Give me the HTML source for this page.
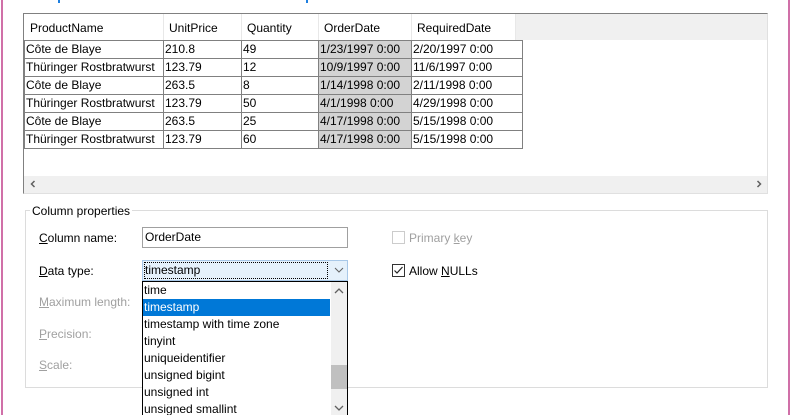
<!DOCTYPE html>
<html><head><meta charset="utf-8"><style>
*{margin:0;padding:0;box-sizing:border-box}
html,body{width:790px;height:415px;overflow:hidden}
body{background:#fff;position:relative;font-family:"Liberation Sans","DejaVu Sans",sans-serif;font-size:12px;color:#000}
.a{position:absolute}
.t{white-space:nowrap;line-height:18px}
u{text-decoration:underline}
.g{color:#a0a0a0}
</style></head><body>
<div class="a" style="left:1px;top:0;width:2px;height:415px;background:#d070a8"></div>
<div class="a" style="left:788px;top:0;width:2px;height:415px;background:#d070a8"></div>
<div class="a" style="left:58px;top:0;width:2px;height:3px;background:#1e7fe0"></div>
<div class="a" style="left:306px;top:0;width:2px;height:3px;background:#1e7fe0"></div>

<!-- grid -->
<div class="a" style="left:23px;top:13px;width:745px;height:181px;border-top:1px solid #808080;border-left:1px solid #808080;border-bottom:1px solid #e0e0e0;border-right:1px solid #e0e0e0;background:#fff"></div>
<div class="a" style="left:24px;top:14px;width:743px;height:26px;background:#f0f0f0"></div>
<div class="a" style="left:24px;top:14px;width:492px;height:26px;background:#fff"></div>
<div class="a" style="left:163px;top:14px;width:1px;height:26px;background:#e8e8e8"></div>
<div class="a" style="left:241px;top:14px;width:1px;height:26px;background:#e8e8e8"></div>
<div class="a" style="left:318px;top:14px;width:1px;height:26px;background:#e8e8e8"></div>
<div class="a" style="left:411px;top:14px;width:1px;height:26px;background:#e8e8e8"></div>
<div class="a" style="left:515px;top:14px;width:1px;height:26px;background:#e8e8e8"></div>
<div class="a t" style="left:30px;top:19px">ProductName</div>
<div class="a t" style="left:169px;top:19px">UnitPrice</div>
<div class="a t" style="left:247px;top:19px">Quantity</div>
<div class="a t" style="left:324px;top:19px">OrderDate</div>
<div class="a t" style="left:417px;top:19px">RequiredDate</div>

<div class="a" style="left:318px;top:40px;width:94px;height:108px;background:#d3d3d3"></div>
<svg class="a" style="left:0;top:0" width="790" height="200">
<g stroke="#808080" stroke-width="1" fill="none" shape-rendering="crispEdges">
<line x1="24" y1="40.5" x2="523" y2="40.5"/>
<line x1="24" y1="58.5" x2="523" y2="58.5"/>
<line x1="24" y1="76.5" x2="523" y2="76.5"/>
<line x1="24" y1="94.5" x2="523" y2="94.5"/>
<line x1="24" y1="112.5" x2="523" y2="112.5"/>
<line x1="24" y1="130.5" x2="523" y2="130.5"/>
<line x1="24" y1="148.5" x2="523" y2="148.5"/>
<line x1="24.5" y1="40" x2="24.5" y2="149"/>
<line x1="163.5" y1="40" x2="163.5" y2="149"/>
<line x1="241.5" y1="40" x2="241.5" y2="149"/>
<line x1="318.5" y1="40" x2="318.5" y2="149"/>
<line x1="411.5" y1="40" x2="411.5" y2="149"/>
<line x1="522.5" y1="40" x2="522.5" y2="149"/>
</g></svg>
<div class="a" style="left:26px;top:40px;line-height:18px;white-space:nowrap">Côte de Blaye<br>Thüringer Rostbratwurst<br>Côte de Blaye<br>Thüringer Rostbratwurst<br>Côte de Blaye<br>Thüringer Rostbratwurst</div>
<div class="a" style="left:165px;top:40px;line-height:18px">210.8<br>123.79<br>263.5<br>123.79<br>263.5<br>123.79</div>
<div class="a" style="left:243px;top:40px;line-height:18px">49<br>12<br>8<br>50<br>25<br>60</div>
<div class="a" style="left:320px;top:40px;line-height:18px;white-space:nowrap">1/23/1997 0:00<br>10/9/1997 0:00<br>1/14/1998 0:00<br>4/1/1998 0:00<br>4/17/1998 0:00<br>4/17/1998 0:00</div>
<div class="a" style="left:413px;top:40px;line-height:18px;white-space:nowrap">2/20/1997 0:00<br>11/6/1997 0:00<br>2/11/1998 0:00<br>4/29/1998 0:00<br>5/15/1998 0:00<br>5/15/1998 0:00</div>
<div class="a" style="left:24px;top:176px;width:743px;height:17px;background:#f0f0f0"></div>
<svg class="a" style="left:30px;top:180px" width="6" height="8"><path d="M4.5 1 L1.5 4 L4.5 7" stroke="#606060" fill="none" stroke-width="1.5"/></svg>
<svg class="a" style="left:756px;top:180px" width="6" height="8"><path d="M1.5 1 L4.5 4 L1.5 7" stroke="#606060" fill="none" stroke-width="1.5"/></svg>

<!-- group -->
<div class="a" style="left:25px;top:210px;width:743px;height:178px;border:1px solid #dcdcdc"></div>
<div class="a t" style="left:30px;top:202px;background:#fff;padding:0 2px">Column properties</div>
<div class="a t" style="left:39px;top:229px"><u>C</u>olumn name:</div>
<div class="a" style="left:142px;top:227px;width:206px;height:21px;border:1px solid #a0a0a0"></div>
<div class="a t" style="left:145px;top:228px">OrderDate</div>
<div class="a t" style="left:39px;top:262px"><u>D</u>ata type:</div>
<div class="a" style="left:142px;top:260px;width:206px;height:21px;border:1px solid #a8c8e8;background:#e5f1fb"></div>
<div class="a" style="left:144px;top:262px;width:184px;height:17px;border:1px dotted #000"></div>
<div class="a t" style="left:145px;top:261px">timestamp</div>
<svg class="a" style="left:334px;top:267px" width="10" height="6"><path d="M1 1 L5 5 L9 1" stroke="#606060" fill="none"/></svg>
<div class="a t g" style="left:39px;top:293px"><u>M</u>aximum length:</div>
<div class="a t g" style="left:39px;top:325px"><u>P</u>recision:</div>
<div class="a t g" style="left:39px;top:356px"><u>S</u>cale:</div>

<div class="a" style="left:392px;top:231px;width:13px;height:13px;border:1px solid #cccccc"></div>
<div class="a t g" style="left:409px;top:229px">Primary <u>k</u>ey</div>
<div class="a" style="left:392px;top:264px;width:13px;height:13px;border:1px solid #333"></div>
<svg class="a" style="left:392px;top:264px" width="13" height="13"><path d="M2.5 6.5 L5 9 L10.5 3" stroke="#222" fill="none" stroke-width="1.2"/></svg>
<div class="a t" style="left:409px;top:262px">Allow <u>N</u>ULLs</div>

<!-- dropdown -->
<div class="a" style="left:142px;top:281px;width:206px;height:150px;border:1px solid #000;background:#fff"></div>
<div class="a" style="left:331px;top:282px;width:16px;height:140px;background:#f0f0f0"></div>
<div class="a" style="left:331px;top:365px;width:16px;height:24px;background:#c0c0c0"></div>
<svg class="a" style="left:334px;top:288px" width="10" height="6"><path d="M1 5 L5 1 L9 5" stroke="#606060" fill="none" stroke-width="1.3"/></svg>
<svg class="a" style="left:334px;top:405px" width="10" height="6"><path d="M1 1 L5 5 L9 1" stroke="#606060" fill="none" stroke-width="1.3"/></svg>
<div class="a" style="left:143px;top:299px;width:187px;height:17px;background:#0078d7"></div>
<div class="a" style="left:144px;top:282px;line-height:17px;white-space:nowrap">time<br><span style="color:#fff">timestamp</span><br>timestamp with time zone<br>tinyint<br>uniqueidentifier<br>unsigned bigint<br>unsigned int<br>unsigned smallint</div>
</body></html>
